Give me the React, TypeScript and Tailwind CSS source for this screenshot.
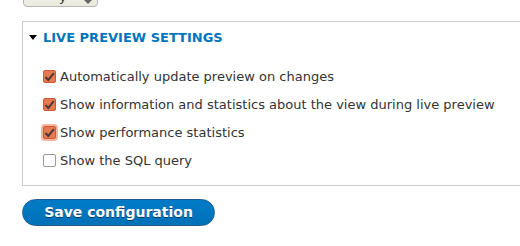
const options = [
  { label: "Automatically update preview on changes", checked: true, focus: false },
  { label: "Show information and statistics about the view during live preview", checked: true, focus: false },
  { label: "Show performance statistics", checked: true, focus: true },
  { label: "Show the SQL query", checked: false, focus: false },
];

function Checkbox({ checked, focus }: { checked: boolean; focus: boolean }) {
  return (
    <span
      className={`flex h-[13px] w-[13px] shrink-0 items-center justify-center rounded-[2px] border ${
        checked ? "border-[#c85a3a] bg-[#e8784f]" : "border-[#999] bg-white"
      } ${focus ? "ring-2 ring-[#f4b59c]" : ""}`}
    >
      {checked && (
        <svg width="11" height="10" viewBox="0 0 11 10">
          <path d="M1.5 5 L4.3 8 L9.8 1.2" fill="none" stroke="#4a3a35" strokeWidth="2" />
        </svg>
      )}
    </span>
  );
}

export default function App() {
  return (
    <div className="relative h-[246px] w-[520px] overflow-hidden bg-white font-['DejaVu_Sans',sans-serif]">
      <div className="absolute left-[23px] top-[-20px] h-[27px] w-[75px] overflow-hidden rounded-[4px] border border-[#b8b8b8] bg-gradient-to-b from-[#fcfcfa] to-[#e9e9dd]">
        <span className="absolute right-[5px] top-[19px] h-0 w-0 border-x-[4px] border-t-[4px] border-x-transparent border-t-[#666]" />
        <span className="absolute left-[35px] top-[9px] text-[13px] leading-[13px] text-[#333]">y</span>
      </div>

      <div className="flex flex-col pl-[22px] pt-[21px]">
        <div className="h-[165px] w-[520px] border border-[#ccc] border-r-0">
          <div className="flex items-center gap-[6px] pl-[6px] pt-[6px]">
            <span className="h-0 w-0 border-x-[4px] border-t-[5px] border-x-transparent border-t-[#000]" />
            <span className="text-[13px] font-bold uppercase text-[#0074bd]">
              Live preview settings
            </span>
          </div>
          <div className="flex flex-col gap-[8px] pl-[20px] pt-[19px]">
            {options.map((o) => (
              <label key={o.label} className="flex h-[20px] items-center gap-[4px] text-[13px] text-[#333]">
                <Checkbox checked={o.checked} focus={o.focus} />
                <span>{o.label}</span>
              </label>
            ))}
          </div>
        </div>

        <button className="mt-[13px] h-[27px] w-[193px] rounded-full border border-[#1e5c90] bg-gradient-to-b from-[#007bc6] to-[#0071b8] text-[14px] font-bold text-white [text-shadow:0_1px_hsla(0,0%,0%,0.5)]">
          Save configuration
        </button>
      </div>
    </div>
  );
}
